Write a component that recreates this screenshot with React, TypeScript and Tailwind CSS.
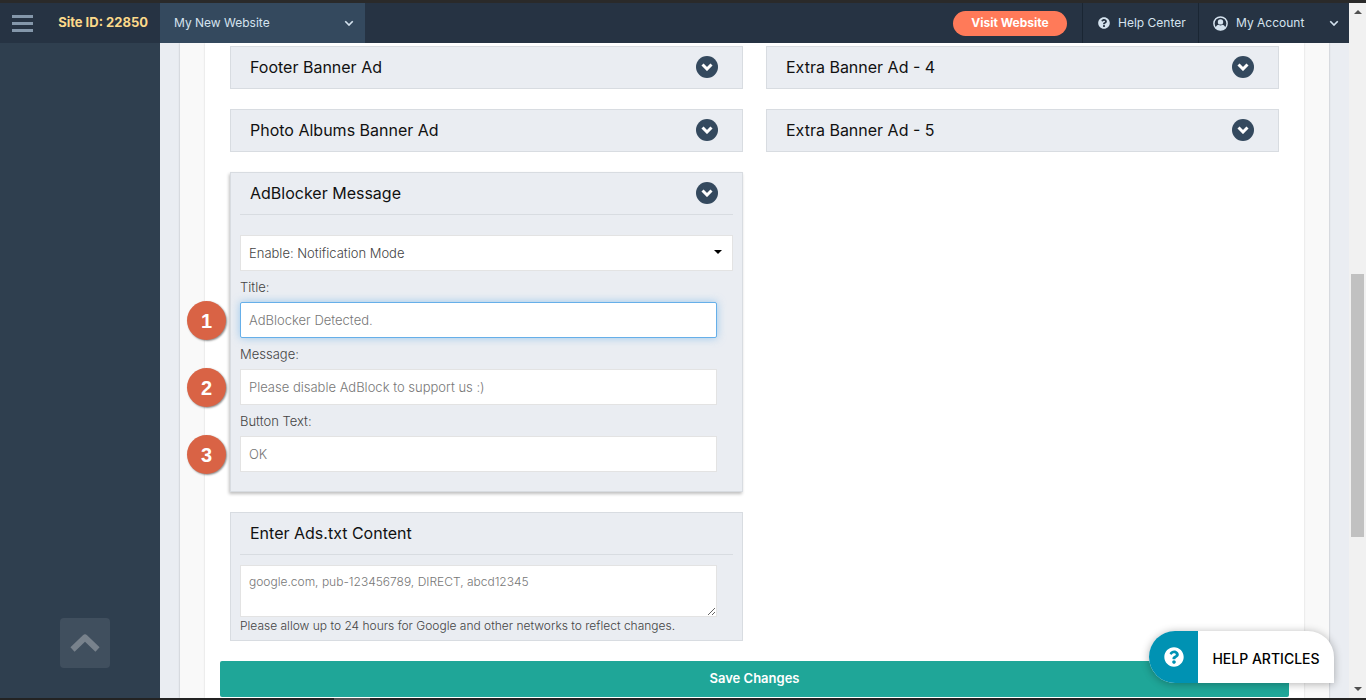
import { useState } from "react";
import type { ReactNode } from "react";
import { FaQuestionCircle } from "react-icons/fa";

const leftBanners = ["Footer Banner Ad", "Photo Albums Banner Ad"];
const rightBanners = ["Extra Banner Ad - 4", "Extra Banner Ad - 5"];

const fields = [
  { id: "title", label: "Title:", value: "AdBlocker Detected.", active: true },
  {
    id: "message",
    label: "Message:",
    value: "Please disable AdBlock to support us :)",
    active: false,
  },
  { id: "button-text", label: "Button Text:", value: "OK", active: false },
];

function Chevron({ className }: { className: string }) {
  return (
    <svg
      viewBox="0 0 12 8"
      className={className}
      fill="none"
      stroke="currentColor"
      aria-hidden="true"
    >
      <path d="M1.5 1.5 6 6l4.500-4.500" />
    </svg>
  );
}

function UserCircle() {
  return (
    <svg viewBox="0 0 15 15" className="size-[15px]" aria-hidden="true">
      <circle
        cx="7.5"
        cy="7.5"
        r="6.6"
        fill="none"
        stroke="currentColor"
        strokeWidth="1.500"
      />
      <circle cx="7.5" cy="5.900" r="2.700" fill="currentColor" />
      <path
        d="M2.600 12c.5-2.300 1.800-3.300 3-3.300.6.5 1.200.7 1.900.7s1.300-.2 1.900-.7c1.200 0 2.500 1 3 3.300-1.300 1.400-3 2.200-4.900 2.200S3.900 13.400 2.600 12z"
        fill="currentColor"
      />
    </svg>
  );
}

function CardHeader({ title, toggle }: { title: string; toggle: boolean }) {
  return (
    <div className="flex h-[41px] items-center justify-between pb-[2px] pl-[19px] pr-6">
      <h3 className="text-base text-[#111]">{title}</h3>
      {toggle && (
        <button
          type="button"
          aria-label={title}
          className="flex size-[22px] items-center justify-center rounded-full bg-[#34495e] text-white"
        >
          <Chevron className="w-3 stroke-3" />
        </button>
      )}
    </div>
  );
}

function Card({ children, open }: { children: ReactNode; open?: boolean }) {
  return (
    <section
      className={
        open
          ? "border border-[#d8dce1] bg-[#eaedf2] shadow-[-1px_2px_3px_rgba(0,0,0,0.25)]"
          : "border border-[#d8dce1] bg-[#eaedf2]"
      }
    >
      {children}
    </section>
  );
}

function TopBar() {
  return (
    <header className="flex h-[43px] shrink-0 items-stretch border-t-[3px] border-[#2a2a2a] bg-[#263343] text-xs text-[#d5e3ef]">
      <div className="flex w-40 items-center justify-between px-3">
        <button type="button" aria-label="Menu" className="flex flex-col gap-1">
          <span className="h-[3px] w-[21px] bg-[#8497aa]" />
          <span className="h-[3px] w-[21px] bg-[#8497aa]" />
          <span className="h-[3px] w-[21px] bg-[#8497aa]" />
        </button>
        <span className="text-[13px] font-bold text-[#fcd98a]">
          Site ID: 22850
        </span>
      </div>
      <button
        type="button"
        className="flex w-[205px] items-center justify-between bg-[#34495e] pl-[14px] pr-[11px]"
      >
        My New Website
        <Chevron className="w-[10px] stroke-2" />
      </button>
      <div className="flex flex-1 items-center justify-end pr-[15px]">
        <a
          href="#visit"
          className="flex h-[25px] w-[114px] items-center justify-center rounded-full bg-[#ff7a59] font-bold text-white"
        >
          Visit Website
        </a>
      </div>
      <a
        href="#help"
        className="flex w-[116px] items-center gap-2 border-l border-[#1a2633] pl-[15px]"
      >
        <FaQuestionCircle className="size-3" />
        Help Center
      </a>
      <button
        type="button"
        className="flex w-[151px] items-center gap-2 border-l border-[#1a2633] pl-[14px] pr-[10px]"
      >
        <UserCircle />
        My Account
        <Chevron className="ml-auto w-[10px] stroke-2" />
      </button>
      <div className="w-[17px] bg-[#f1f1f1] pt-[7px]">
        <svg viewBox="0 0 8 4" className="mx-auto w-2" aria-hidden="true">
          <path d="M0 4 4 0l4 4z" fill="#505050" />
        </svg>
      </div>
    </header>
  );
}

function AdBlockerCard() {
  const [values, setValues] = useState(fields.map((f) => f.value));

  return (
    <Card open>
      <CardHeader title="AdBlocker Message" toggle />
      <div className="mx-[9px] border-t border-[#d8dce1] pb-[19px] pt-5">
        <div className="relative">
          <select
            aria-label="AdBlocker mode"
            className="block h-9 w-full appearance-none border border-[#e3e3e3] bg-white px-2 pt-px text-[13px] font-light text-[#444]"
          >
            <option>Enable: Notification Mode</option>
            <option>Disable</option>
          </select>
          <svg
            viewBox="0 0 8 4"
            className="pointer-events-none absolute right-[11px] top-[15px] w-2"
            aria-hidden="true"
          >
            <path d="M0 0h8L4 4z" fill="#000" />
          </svg>
        </div>
        {fields.map((field, i) => (
          <div key={field.id}>
            <label
              htmlFor={field.id}
              className="block h-[31px] text-[13px] font-light leading-[33px] text-[#444]"
            >
              {field.label}
            </label>
            <div className="relative mr-4">
              <input
                id={field.id}
                type="text"
                value={values[i]}
                onChange={(e) =>
                  setValues(values.map((v, n) => (n === i ? e.target.value : v)))
                }
                className={
                  field.active
                    ? "block h-9 w-full rounded-xs border border-[#66afe9] bg-white px-2 text-[13px] font-light text-[#777] shadow-[0_0_8px_rgba(102,175,233,0.6)]"
                    : "block h-9 w-full border border-[#e3e3e3] bg-white px-2 text-[13px] font-light text-[#777]"
                }
              />
              <span className="absolute -left-[53px] -top-px flex size-[39px] items-center justify-center rounded-full bg-[#d96345] font-['Liberation_Sans',sans-serif] text-xl font-bold text-white shadow-[1px_1px_2px_rgba(0,0,0,0.45)]">
                {i + 1}
              </span>
            </div>
          </div>
        ))}
      </div>
    </Card>
  );
}

function AdsTxtCard() {
  return (
    <Card>
      <CardHeader title="Enter Ads.txt Content" toggle={false} />
      <div className="mx-[9px] border-t border-[#d8dce1] pb-[5px] pt-[10px]">
        <textarea
          aria-label="Ads.txt content"
          defaultValue="google.com, pub-123456789, DIRECT, abcd12345"
          className="mr-4 block h-[52px] w-[calc(100%-16px)] border border-[#e3e3e3] bg-white px-2 py-[6px] text-xs font-light leading-5 text-[#777]"
        />
        <p className="text-xs font-light leading-[18px] text-[#444]">
          Please allow up to 24 hours for Google and other networks to reflect
          changes.
        </p>
      </div>
    </Card>
  );
}

export default function App() {
  return (
    <div className="flex h-screen flex-col overflow-hidden font-['Inter',sans-serif]">
      <TopBar />
      <div className="flex min-h-0 flex-1">
        <aside className="flex w-40 shrink-0 flex-col items-end justify-end bg-[#2f3f4f] pb-[30px] pr-[50px]">
          <button
            type="button"
            aria-label="Back to top"
            className="flex size-[50px] items-center justify-center rounded bg-[#404f5e] text-[#78828c]"
          >
            <svg viewBox="0 0 32 20" className="w-8" aria-hidden="true">
              <path
                d="M3.500 16.500 16 4.500l12.500 12"
                fill="none"
                stroke="currentColor"
                strokeWidth="6"
                strokeLinejoin="round"
              />
            </svg>
          </button>
        </aside>

        <main className="relative min-w-0 flex-1 overflow-hidden bg-[#eaedf2] px-5">
          <div className="h-full bg-[#f9f9f9] px-[25px] shadow-[0_0_2px_rgba(0,0,0,0.25)]">
            <div className="h-full bg-white px-[15px] pt-[3px] shadow-[0_0_2px_rgba(0,0,0,0.15)]">
              <div className="grid grid-cols-2 gap-x-[23px] px-[10px]">
                <div className="flex flex-col gap-5">
                  {leftBanners.map((title) => (
                    <Card key={title}>
                      <CardHeader title={title} toggle />
                    </Card>
                  ))}
                  <AdBlockerCard />
                  <AdsTxtCard />
                </div>
                <div className="flex flex-col gap-5">
                  {rightBanners.map((title) => (
                    <Card key={title}>
                      <CardHeader title={title} toggle />
                    </Card>
                  ))}
                </div>
              </div>
              <button
                type="button"
                className="mt-5 h-9 w-full rounded-xs bg-[#1fa698] text-[13px] font-semibold text-white"
              >
                Save Changes
              </button>
            </div>
          </div>

          <a
            href="#articles"
            className="absolute bottom-[15px] right-[15px] flex h-[52px] overflow-hidden rounded-l-[26px] rounded-tr-[26px] bg-white text-sm font-medium text-black shadow-[0_1px_8px_rgba(0,0,0,0.3)]"
          >
            <span className="flex w-[49px] items-center justify-center bg-[#0092b3] text-white">
              <FaQuestionCircle className="size-5" />
            </span>
            <span className="flex w-[136px] items-center justify-center pt-1">
              HELP ARTICLES
            </span>
          </a>
        </main>

        <div className="flex w-[17px] shrink-0 flex-col items-center bg-[#f1f1f1] pb-[7px]">
          <div className="grow-[231]" />
          <div className="w-[13px] grow-[263] bg-[#c1c1c1]" />
          <div className="grow-[150]" />
          <svg viewBox="0 0 8 4" className="w-2" aria-hidden="true">
            <path d="M0 0h8L4 4z" fill="#505050" />
          </svg>
        </div>
      </div>
      <div className="flex h-[2px] shrink-0 bg-[#232323]">
        <div className="ml-[334px] w-9 bg-[#555]" />
      </div>
    </div>
  );
}
